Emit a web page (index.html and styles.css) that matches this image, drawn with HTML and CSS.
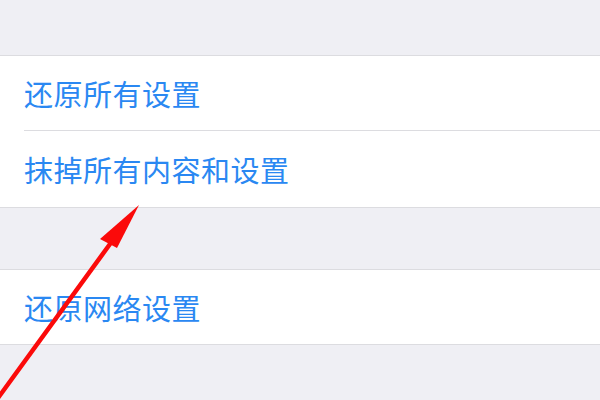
FILE: index.html
```html
<!DOCTYPE html>
<html lang="zh-CN">
<head>
<meta charset="utf-8">
<link rel="stylesheet" href="styles.css">
</head>
<body>
<div class="page">
  <div class="gap gap-top"></div>
  <div class="group">
    <div class="row"><span class="label">还原所有设置</span></div>
    <div class="row"><span class="label">抹掉所有内容和设置</span></div>
  </div>
  <div class="gap gap-mid"></div>
  <div class="group">
    <div class="row"><span class="label">还原网络设置</span></div>
  </div>
  <div class="gap"></div>
  <svg class="arrow" width="600" height="400" viewBox="0 0 600 400">
    <line x1="-2" y1="398" x2="110" y2="244" stroke="#fb0a0a" stroke-width="4.5" stroke-linecap="round"/>
    <polygon points="139,205 100,239 117,248" fill="#fb0a0a"/>
  </svg>
</div>
</body>
</html>
```
FILE: styles.css
```css
html, body {
  margin: 0;
  padding: 0;
}
body {
  background: #efeff4;
  font-family: "Noto Sans CJK SC", "Noto Sans", sans-serif;
}
.page {
  position: relative;
  width: 600px;
  height: 400px;
  overflow: hidden;
  display: flex;
  flex-direction: column;
}
.gap {
  flex: 1;
}
.gap-top {
  flex: 0 0 55px;
}
.gap-mid {
  flex: 0 0 61px;
}
.group {
  background: #fff;
  border-top: 1px solid #dcdce0;
  border-bottom: 1px solid #dcdce0;
}
.row {
  margin-left: 24px;
  height: 74px;
  display: flex;
  align-items: center;
}
.row + .row {
  border-top: 1px solid #dcdce0;
  height: 76px;
}
.label {
  font-size: 29px;
  color: #2a88f2;
  line-height: 1;
  letter-spacing: 0.5px;
}
.arrow {
  position: absolute;
  left: 0;
  top: 0;
}
```
